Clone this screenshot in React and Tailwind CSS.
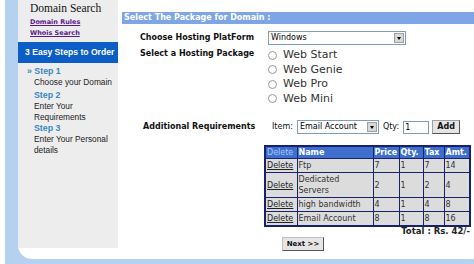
import React from "react";

const rows = [
  { name: "Ftp", price: 7, qty: 1, tax: 7, amt: 14 },
  { name: "Dedicated Servers", price: 2, qty: 1, tax: 2, amt: 4 },
  { name: "high bandwidth", price: 4, qty: 1, tax: 4, amt: 8 },
  { name: "Email Account", price: 8, qty: 1, tax: 8, amt: 16 },
];

function Radio() {
  return (
    <span className="inline-block w-[9px] h-[9px] rounded-full border border-[#9a9a9a] bg-white mr-[6px]" />
  );
}

function SelectBox({ label, w }) {
  return (
    <div
      className={`flex items-center justify-between border border-[#7f9db9] bg-white h-[14px] pl-[2px] ${w}`}
    >
      <span className="text-[8px] leading-none text-black">{label}</span>
      <span className="w-[10px] h-[10px] mr-[1px] bg-[#d8d8d8] border border-[#a0a0a0] flex items-center justify-center">
        <span className="block w-0 h-0 border-l-[2.5px] border-r-[2.5px] border-t-[3px] border-l-transparent border-r-transparent border-t-black" />
      </span>
    </div>
  );
}

export default function App() {
  return (
    <div className="w-[474px] h-[264px] overflow-hidden flex bg-white font-['DejaVu_Sans',sans-serif]">
      <div className="w-[5px] shrink-0 bg-white" />
      <div className="flex-1 bg-[#b5d1f1] pl-[13px] pb-[5px] flex">
        <div className="flex-1 bg-white rounded-bl-[14px] flex">
          {/* Sidebar */}
          <div className="w-[100px] shrink-0 mb-[11px] bg-[#ededed] flex flex-col">
            <div className="pl-[12px] pt-[2px] h-[42px]">
              <div className="font-['Liberation_Serif',serif] text-[11.5px] leading-[12px] text-[#111] mb-[3px]">
                Domain Search
              </div>
              <div className="font-['DejaVu_Sans',sans-serif] font-bold text-[6.5px] leading-[11px] text-[#5a1a8c] underline">
                Domain Rules
              </div>
              <div className="font-['DejaVu_Sans',sans-serif] font-bold text-[6.5px] leading-[11px] text-[#5a1a8c] underline">
                Whois Search
              </div>
            </div>
            <div className="h-[21px] bg-[#0c5dc6] flex items-center pl-[7px] font-['Liberation_Sans',sans-serif] font-bold text-[8.6px] text-white whitespace-nowrap">
              3 Easy Steps to Order
            </div>
            <div className="pt-[3px] pl-[9px] font-['Liberation_Sans',sans-serif] text-[8.3px] leading-[11px] text-[#222] whitespace-nowrap">
              <div className="font-bold text-[#3a87bd] text-[8.8px]">» Step 1</div>
              <div className="pl-[7px]">Choose your Domain</div>
              <div className="pl-[7px] mt-[2px] font-bold text-[#3a87bd] text-[8.8px]">Step 2</div>
              <div className="pl-[7px]">Enter Your</div>
              <div className="pl-[7px]">Requirements</div>
              <div className="pl-[7px] font-bold text-[#3a87bd] text-[8.8px]">Step 3</div>
              <div className="pl-[7px]">Enter Your Personal</div>
              <div className="pl-[7px]">details</div>
            </div>
          </div>

          {/* Main */}
          <div className="flex-1 pl-[4px] pt-[12px] flex flex-col">
            <div className="h-[12px] bg-[#7ea6e6] flex items-center pl-[2px] text-white font-bold text-[8px] leading-none">
              Select The Package for Domain :
            </div>

            <div className="flex items-center mt-[7px] h-[14px]">
              <div className="w-[146px] pl-[18px] font-bold text-[8px] text-[#111]">
                Choose Hosting PlatForm
              </div>
              <SelectBox label="Windows" w="w-[138px]" />
            </div>

            <div className="flex mt-[2px]">
              <div className="w-[146px] pl-[18px] font-bold text-[8px] text-[#111] leading-[14px]">
                Select a Hosting Package
              </div>
              <div className="flex flex-col text-[11px] text-[#333] leading-[14.5px] pt-[1px]">
                {["Web Start", "Web Genie", "Web Pro", "Web Mini"].map((t) => (
                  <div key={t} className="flex items-center">
                    <Radio />
                    {t}
                  </div>
                ))}
              </div>
            </div>

            <div className="flex items-center mt-[14px] h-[14px]">
              <div className="w-[150px] pl-[21px] font-bold text-[8px] text-[#111]">
                Additional Requirements
              </div>
              <span className="text-[8px] text-[#111] mr-[4px]">Item:</span>
              <SelectBox label="Email Account" w="w-[82px]" />
              <span className="text-[8px] text-[#111] ml-[4px] mr-[4px]">Qty:</span>
              <div className="w-[26px] h-[13px] border border-[#7f9db9] bg-white text-[8px] pl-[1px] leading-[11px]">1</div>
              <div className="ml-[3px] w-[28px] h-[14px] bg-[#e5e5e5] border border-[#a0a0a0] border-r-[#555] border-b-[#555] flex items-center justify-center font-bold text-[8px] text-[#111]">
                Add
              </div>
            </div>

            <div className="flex mt-[11px] pl-[142px]">
              <table className="border-collapse border-2 border-[#18226a] text-[8px] leading-[11px] text-[#333] bg-[#dcdcdc] w-[207px]">
                <thead>
                  <tr className="bg-[#3e6fcf] text-white font-bold text-left">
                    <th className="border border-[#18226a] px-[1px] font-normal text-[#a8c8ff] w-[32px]">Delete</th>
                    <th className="border border-[#18226a] px-[1px] w-[76px]">Name</th>
                    <th className="border border-[#18226a] px-[1px] w-[26px]">Price</th>
                    <th className="border border-[#18226a] px-[1px] w-[24px]">Qty.</th>
                    <th className="border border-[#18226a] px-[1px] w-[21px]">Tax</th>
                    <th className="border border-[#18226a] px-[1px]">Amt.</th>
                  </tr>
                </thead>
                <tbody>
                  {rows.map((r) => (
                    <tr key={r.name}>
                      <td className="border border-[#18226a] px-[1px] py-[1px] underline text-[#222]">Delete</td>
                      <td className="border border-[#18226a] px-[1px] py-[1px]">{r.name}</td>
                      <td className="border border-[#18226a] px-[1px] py-[1px]">{r.price}</td>
                      <td className="border border-[#18226a] px-[1px] py-[1px]">{r.qty}</td>
                      <td className="border border-[#18226a] px-[1px] py-[1px]">{r.tax}</td>
                      <td className="border border-[#18226a] px-[1px] py-[1px]">{r.amt}</td>
                    </tr>
                  ))}
                </tbody>
              </table>
            </div>

            <div className="flex justify-end pr-[4px] font-bold text-[8.5px] leading-[9px] text-[#222]">
              Total : Rs. 42/-
            </div>
            <div className="pl-[160px] mt-[1px]">
              <div className="w-[42px] h-[14px] bg-[#e5e5e5] border border-[#c0c0c0] border-r-[#555] border-b-[#555] flex items-center justify-center text-[7px] font-bold text-[#111]">
                Next &gt;&gt;
              </div>
            </div>
          </div>
        </div>
      </div>
    </div>
  );
}
